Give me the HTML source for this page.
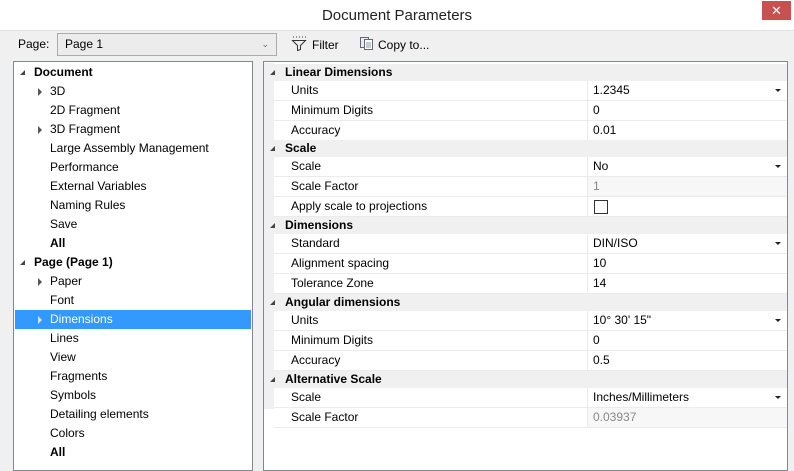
<!DOCTYPE html>
<html><head><meta charset="utf-8"><style>
*{margin:0;padding:0;box-sizing:border-box}
body{width:794px;height:462px;position:relative;overflow:hidden;background:#f0f0f0;font-family:"Liberation Sans",sans-serif;font-size:12px;color:#000}
.abs{position:absolute}
#title{left:0;top:0;width:794px;height:31px;background:#fff;border-bottom:1px solid #e3e3e3}
#title span{position:absolute;left:0;width:794px;text-align:center;top:7px;font-size:15px;color:#222}
#close{left:762px;top:1px;width:29px;height:19px;background:#c75050;color:#fff;text-align:center;font-size:13px;line-height:19px}
#tree{left:13px;top:61px;width:240px;height:410px;background:#fff;border:1px solid #828790}
.ti{position:absolute;left:0;width:238px;height:19px;line-height:19px;white-space:nowrap}
.ti b{font-weight:bold}
.sel{background:#3399ff;color:#fff;left:1px;width:236px}
.arr{position:absolute;width:0;height:0;border-top:4px solid transparent;border-bottom:4px solid transparent;border-left:4px solid #555;top:6px}
.exp{position:absolute;width:0;height:0;border-left:5px solid transparent;border-bottom:5px solid #444;top:7px}
#grid{left:263px;top:61px;width:525px;height:410px;background:#fff;border:1px solid #828790}
#gi{position:absolute;left:0;top:1px;width:523px;height:400px}
.h{position:absolute;left:0;width:523px;height:17px;background:#f0f0f0;font-weight:bold;line-height:17px}
.h span{position:absolute;left:21px}
.r{position:absolute;left:10px;width:513px;height:20px;line-height:19px;border-bottom:1px solid #ebebeb}
.r .n{position:absolute;left:17px}
.r .v{position:absolute;left:313px;top:0;height:19px;width:200px;border-left:1px solid #ebebeb;padding-left:5px}
.dis{background:#f7f7f7;color:#888}
.dd{position:absolute;right:6px;top:8px;border-left:3px solid transparent;border-right:3px solid transparent;border-top:3px solid #222}
</style></head><body>
<div id="title" class="abs"><span>Document Parameters</span></div>
<div id="close" class="abs">✕</div>
<div class="abs" style="left:18px;top:37px">Page:</div>
<div class="abs" style="left:57px;top:33px;width:220px;height:23px;border:1px solid #acacac;background:#ececec;padding-left:7px;line-height:21px">Page 1<span style="position:absolute;right:7px;top:0;font-size:9px;color:#666">⌄</span></div>
<svg class="abs" style="left:291px;top:36px" width="16" height="16" viewBox="0 0 16 16"><path d="M2 1h1M5 1h1M8 1h1M11 1h1M14 1h1" stroke="#333"/><path d="M1.5 4.5h13l-5 5v4l-3 1v-5z" fill="none" stroke="#333"/></svg>
<div class="abs" style="left:312px;top:38px">Filter</div>
<svg class="abs" style="left:358px;top:35px" width="16" height="16" viewBox="0 0 16 16"><rect x="2.5" y="2.5" width="8" height="10" fill="#e8eef6" stroke="#667"/><rect x="6.5" y="4.5" width="8" height="10" fill="#fff" stroke="#667"/><path d="M8 8h5M8 10h5M8 12h5" stroke="#89a"/></svg>
<div class="abs" style="left:378px;top:38px">Copy to...</div>

<div id="tree" class="abs">
<div class="ti" style="top:1px"><div class="exp" style="left:6px"></div><b style="position:absolute;left:20px">Document</b></div>
<div class="ti" style="top:20px"><div class="arr" style="left:24px"></div><span style="position:absolute;left:36px">3D</span></div>
<div class="ti" style="top:39px"><span style="position:absolute;left:36px">2D Fragment</span></div>
<div class="ti" style="top:58px"><div class="arr" style="left:24px"></div><span style="position:absolute;left:36px">3D Fragment</span></div>
<div class="ti" style="top:77px"><span style="position:absolute;left:36px">Large Assembly Management</span></div>
<div class="ti" style="top:96px"><span style="position:absolute;left:36px">Performance</span></div>
<div class="ti" style="top:115px"><span style="position:absolute;left:36px">External Variables</span></div>
<div class="ti" style="top:134px"><span style="position:absolute;left:36px">Naming Rules</span></div>
<div class="ti" style="top:153px"><span style="position:absolute;left:36px">Save</span></div>
<div class="ti" style="top:172px"><b style="position:absolute;left:36px">All</b></div>
<div class="ti" style="top:191px"><div class="exp" style="left:6px"></div><b style="position:absolute;left:20px">Page (Page 1)</b></div>
<div class="ti" style="top:210px"><div class="arr" style="left:24px"></div><span style="position:absolute;left:36px">Paper</span></div>
<div class="ti" style="top:229px"><span style="position:absolute;left:36px">Font</span></div>
<div class="ti sel" style="top:248px"><div class="arr" style="left:23px;border-left-color:#cfe4ff"></div><span style="position:absolute;left:35px">Dimensions</span></div>
<div class="ti" style="top:267px"><span style="position:absolute;left:36px">Lines</span></div>
<div class="ti" style="top:286px"><span style="position:absolute;left:36px">View</span></div>
<div class="ti" style="top:305px"><span style="position:absolute;left:36px">Fragments</span></div>
<div class="ti" style="top:324px"><span style="position:absolute;left:36px">Symbols</span></div>
<div class="ti" style="top:343px"><span style="position:absolute;left:36px">Detailing elements</span></div>
<div class="ti" style="top:362px"><span style="position:absolute;left:36px">Colors</span></div>
<div class="ti" style="top:381px"><b style="position:absolute;left:36px">All</b></div>
</div>

<div id="grid" class="abs"><div id="gi">
<div class="abs" style="left:0;top:0;width:10px;height:346px;background:#f0f0f0"></div>
<div class="h" style="top:1px"><div class="exp" style="left:6px;top:6px"></div><span>Linear Dimensions</span></div>
<div class="r" style="top:18px"><span class="n">Units</span><div class="v">1.2345<div class="dd"></div></div></div>
<div class="r" style="top:38px"><span class="n">Minimum Digits</span><div class="v">0</div></div>
<div class="r" style="top:58px"><span class="n">Accuracy</span><div class="v">0.01</div></div>
<div class="h" style="top:77px"><div class="exp" style="left:6px;top:6px"></div><span>Scale</span></div>
<div class="r" style="top:94px"><span class="n">Scale</span><div class="v">No<div class="dd"></div></div></div>
<div class="r" style="top:114px"><span class="n">Scale Factor</span><div class="v dis">1</div></div>
<div class="r" style="top:134px"><span class="n">Apply scale to projections</span><div class="v"><div style="position:absolute;left:6px;top:3px;width:14px;height:14px;border:1px solid #333"></div></div></div>
<div class="h" style="top:154px"><div class="exp" style="left:6px;top:6px"></div><span>Dimensions</span></div>
<div class="r" style="top:171px"><span class="n">Standard</span><div class="v">DIN/ISO<div class="dd"></div></div></div>
<div class="r" style="top:191px"><span class="n">Alignment spacing</span><div class="v">10</div></div>
<div class="r" style="top:211px"><span class="n">Tolerance Zone</span><div class="v">14</div></div>
<div class="h" style="top:231px"><div class="exp" style="left:6px;top:6px"></div><span>Angular dimensions</span></div>
<div class="r" style="top:248px"><span class="n">Units</span><div class="v">10° 30' 15"<div class="dd"></div></div></div>
<div class="r" style="top:268px"><span class="n">Minimum Digits</span><div class="v">0</div></div>
<div class="r" style="top:288px"><span class="n">Accuracy</span><div class="v">0.5</div></div>
<div class="h" style="top:308px"><div class="exp" style="left:6px;top:6px"></div><span>Alternative Scale</span></div>
<div class="r" style="top:325px"><span class="n">Scale</span><div class="v">Inches/Millimeters<div class="dd"></div></div></div>
<div class="r" style="top:345px"><span class="n">Scale Factor</span><div class="v dis">0.03937</div></div>
</div></div>
</body></html>
